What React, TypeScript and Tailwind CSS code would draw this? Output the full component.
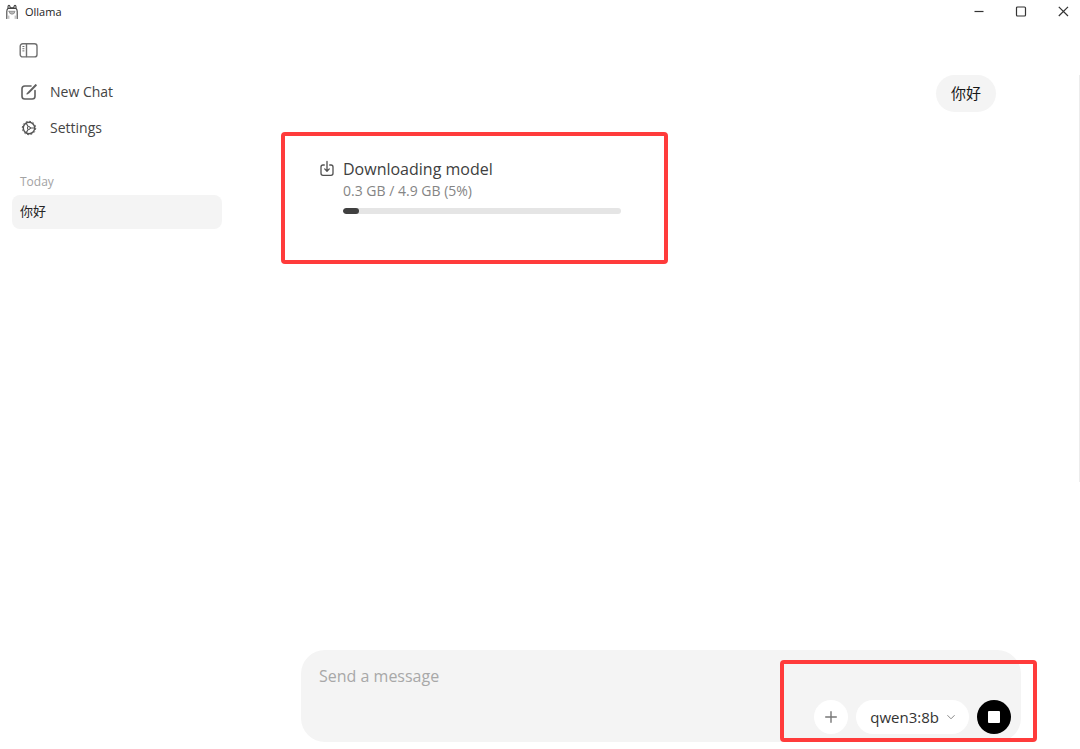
import React from "react";

function OllamaLogo() {
  return (
    <svg className="h-4 w-3" viewBox="0 0 12 16" fill="none" stroke="#444" strokeWidth="1.1" strokeLinecap="round" strokeLinejoin="round" aria-hidden="true">
      <path d="M.8 14.500V7.500C.8 5.800 1.200 5 2 4.500V2.500C2.200 1 3.700 1 4 2.500L4.200 3.800H7.800L8 2.500C8.300 1 9.800 1 10 2.500V4.500C10.800 5 11.200 5.800 11.200 7.500V14.500" />
      <path d="M2.200 4.400H9.800" />
      <path d="M3 7.300H9Q8.700 10.200 6 10.200Q3.300 10.200 3 7.300Z" fill="#bbb" stroke="#888" strokeWidth=".8" />
      <path d="M2.800 14.500V12M9.200 14.500V12" stroke="#999" strokeWidth=".8" />
    </svg>
  );
}

function SidebarIcon() {
  return (
    <svg className="h-5 w-5" viewBox="0 0 20 20" fill="none" stroke="#707070" strokeWidth="1.400" strokeLinecap="round" aria-hidden="true">
      <rect x="1.200" y="3.700" width="16.800" height="13.200" rx="2.500" />
      <path d="M7.500 4V16.500" />
      <path d="M3.800 6.500H5M3.800 8.700H5M3.800 10.900H5" strokeWidth="1" />
    </svg>
  );
}

function ComposeIcon() {
  return (
    <svg className="h-[18px] w-[18px]" viewBox="0 0 18 18" fill="none" stroke="#606060" strokeWidth="1.600" strokeLinecap="round" strokeLinejoin="round" aria-hidden="true">
      <path d="M11 3H4.800Q2 3 2 5.800V13.200Q2 16 4.800 16H12.200Q15 16 15 13.200V7.500" />
      <path d="M15.700 1.700L8.300 9.500L7 11L8.600 10.100L16.300 2.300" strokeWidth="1.200" />
    </svg>
  );
}

function GearIcon() {
  return (
    <svg className="h-[18px] w-[18px]" viewBox="0 0 18 18" fill="none" stroke="#555" strokeLinecap="round" aria-hidden="true">
      <circle cx="9" cy="9" r="5.700" strokeWidth="1.400" />
      <circle cx="9" cy="9" r="6.700" strokeWidth="1" strokeDasharray="1.800 1.708" strokeLinecap="butt" />
      <path d="M9 9H14.500M9 9L6.200 4.300M9 9L6.200 13.700" strokeWidth="1.200" />
      <circle cx="8.900" cy="9" r="1.500" strokeWidth="1" fill="#fff" />
    </svg>
  );
}

function DownloadIcon() {
  return (
    <svg className="h-[18px] w-4 shrink-0" viewBox="0 0 16 18" fill="none" stroke="#505050" strokeWidth="1.300" strokeLinecap="round" strokeLinejoin="round" aria-hidden="true">
      <path d="M5.300 5H4Q2 5 2 7V13.300Q2 15.400 4 15.400H12Q14 15.400 14 13.300V7Q14 5 12 5H10.700" />
      <path d="M8 1.500V11M5.700 8.900L8 11.200L10.300 8.900" />
    </svg>
  );
}

function TitleBar() {
  return (
    <header className="flex h-6 shrink-0 items-center justify-between pl-[6px]">
      <div className="flex items-center gap-[7px]">
        <OllamaLogo />
        <span className="text-[11px] leading-4 text-[#222]">Ollama</span>
      </div>
      <div className="flex h-6">
        <button type="button" aria-label="Minimize" className="flex w-[42px] items-center justify-center">
          <svg className="h-3 w-3" viewBox="0 0 12 12" stroke="#333" strokeWidth="1.200"><path d="M1.500 5.500H10.500" /></svg>
        </button>
        <button type="button" aria-label="Maximize" className="flex w-[42px] items-center justify-center">
          <svg className="h-3 w-3" viewBox="0 0 12 12" fill="none" stroke="#333" strokeWidth="1.200"><rect x="1.500" y="1" width="9" height="9" rx="1" /></svg>
        </button>
        <button type="button" aria-label="Close" className="flex w-[38px] items-center justify-center pl-1">
          <svg className="h-3 w-3" viewBox="0 0 12 12" stroke="#333" strokeWidth="1.200"><path d="M1.800 .8L11 10M11 .8L1.800 10" /></svg>
        </button>
      </div>
    </header>
  );
}

function Sidebar() {
  return (
    <aside className="flex w-[242px] shrink-0 flex-col pl-3 pr-5 pt-4">
      <button type="button" aria-label="Toggle sidebar" className="ml-[7px] flex h-5 w-5 items-center">
        <SidebarIcon />
      </button>
      <nav className="mt-[14px] flex flex-col text-sm text-[#444]">
        <a href="#new" className="flex h-9 items-center gap-3 pl-2">
          <ComposeIcon />
          New Chat
        </a>
        <a href="#settings" className="flex h-9 items-center gap-3 pl-2">
          <GearIcon />
          Settings
        </a>
      </nav>
      <h2 className="mt-7 pl-2 text-xs leading-4 text-[#a3a3a3]">Today</h2>
      <a href="#chat" className="mt-[5px] flex h-[34px] items-center rounded-lg bg-[#f4f4f4] pl-2 text-[13px] text-[#262626]">
        你好
      </a>
    </aside>
  );
}

function DownloadStatus() {
  const progress = 5.8;
  return (
    <div className="mt-5 -ml-5 h-[132px] w-[387px] max-w-full rounded border-4 border-[#ff3b3b] pl-[34px] pr-[43px] pt-[21px]">
      <div className="flex gap-2">
        <div className="flex h-6 items-center"><DownloadIcon /></div>
        <div className="min-w-0 flex-1">
          <p className="text-base leading-6 text-[#404040]">Downloading model</p>
          <p className="text-sm leading-5 text-[#858585]">0.3 GB / 4.9 GB (5%)</p>
          <div role="progressbar" aria-label="Download progress" aria-valuenow={5} className="mt-[7px] h-[6px] overflow-hidden rounded-full bg-[#e5e5e5]">
            <div className="h-full rounded-full bg-[#404040]" style={{ width: `${progress}%` }} />
          </div>
        </div>
      </div>
    </div>
  );
}

function Composer() {
  return (
    <form className="relative mx-auto flex w-full max-w-[720px] flex-col justify-between rounded-[24px] bg-[#f4f4f4] pb-2 pl-[18px] pr-[10px] pt-[14px]">
      <textarea aria-label="Message" rows={1} placeholder="Send a message" className="h-6 w-full resize-none bg-transparent text-base leading-6 outline-none placeholder:text-[#a8a8a8]" />
      <div className="mt-3 flex items-center justify-end gap-2">
        <button type="button" aria-label="Add attachment" className="flex h-[34px] w-[34px] items-center justify-center rounded-full bg-white">
          <svg className="h-3 w-3" viewBox="0 0 12 12" stroke="#777" strokeWidth="1.400" strokeLinecap="round"><path d="M6 .7V11.300M.7 6H11.300" /></svg>
        </button>
        <button type="button" className="flex h-[34px] items-center gap-2 rounded-full bg-white px-[14px] text-[15px] text-[#333]">
          qwen3:8b
          <svg className="h-2 w-2" viewBox="0 0 8 8" fill="none" stroke="#888" strokeWidth="1" strokeLinecap="round" strokeLinejoin="round" aria-hidden="true"><path d="M.7 2.500L4 5.800L7.300 2.500" /></svg>
        </button>
        <button type="button" aria-label="Stop" className="flex h-[34px] w-[34px] items-center justify-center rounded-full bg-black">
          <span className="h-3 w-3 rounded-[1px] bg-white" />
        </button>
      </div>
      <div className="pointer-events-none absolute -right-4 bottom-0 top-[10px] w-[257px] rounded border-4 border-[#ff3b3b]" />
    </form>
  );
}

export default function App() {
  return (
    <div className="flex min-h-screen flex-col bg-white font-['Open_Sans','Noto_Sans_CJK_SC',sans-serif]">
      <TitleBar />
      <div className="flex flex-1">
        <Sidebar />
        <main className="relative flex min-w-0 flex-1 flex-col justify-between pb-[7px] pt-[51px]">
          <div className="mx-auto w-full max-w-[720px]">
            <div className="flex justify-end pr-[25px]">
              <p className="flex h-[37px] items-center rounded-full bg-[#f4f4f4] px-[15px] text-[15px] text-[#171717]">你好</p>
            </div>
            <DownloadStatus />
          </div>
          <Composer />
          <div className="absolute right-0 top-[51px] h-[407px] w-px bg-[#ececec]" />
        </main>
      </div>
    </div>
  );
}
